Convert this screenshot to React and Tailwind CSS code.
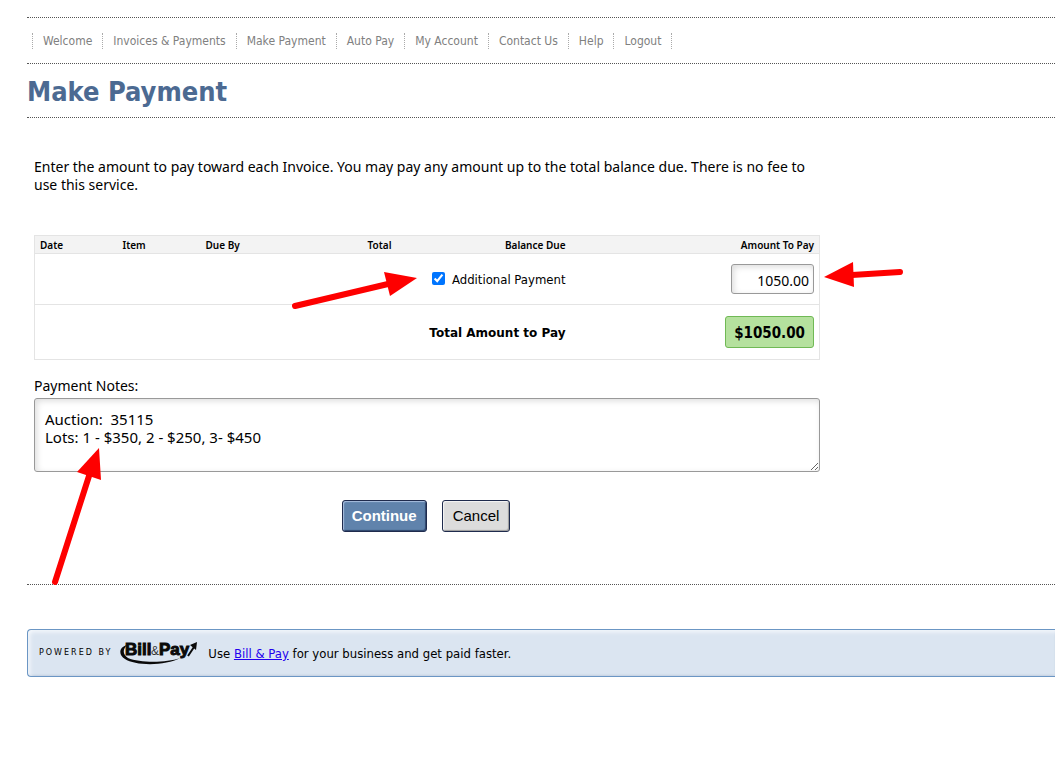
import React, { useState } from "react";

const navItems = [
  "Welcome",
  "Invoices & Payments",
  "Make Payment",
  "Auto Pay",
  "My Account",
  "Contact Us",
  "Help",
  "Logout",
];

const Logo = () => (
  <svg
    width="78"
    height="30"
    viewBox="0 0 78 30"
    role="img"
    aria-label="Bill & Pay"
    className="shrink-0"
  >
    <path
      d="M7 7C-1 9 -2 17 5 21C15 28 46 28 60 20C46 25 20 25 8 20C2 16 3 11 7 7Z"
      fill="#0a0a0a"
    />
    <g
      fill="#0a0a0a"
      stroke="#0a0a0a"
      strokeWidth="1"
      fontFamily="'Liberation Sans', sans-serif"
      fontWeight="700"
      fontSize="17"
    >
      <text x="5" y="17">
        Bill
      </text>
      <text x="39" y="17">
        Pay
      </text>
    </g>
    <text
      x="31"
      y="17"
      fill="#333"
      fontFamily="'Liberation Sans', sans-serif"
      fontSize="12"
    >
      &amp;
    </text>
    <path d="M68 18L74 9" stroke="#0a0a0a" strokeWidth="2" />
    <path d="M70 7L77 4L76 12Z" fill="#0a0a0a" />
  </svg>
);

const Arrows = () => (
  <svg
    className="absolute left-0 top-0 pointer-events-none"
    width="920"
    height="600"
    fill="#fe0000"
    stroke="#fe0000"
    strokeLinecap="round"
    aria-hidden="true"
  >
    <path d="M295 306L388 284" strokeWidth="6" />
    <path d="M417 278L384 272L390 296Z" stroke="none" />
    <path d="M900 272L852 275" strokeWidth="6" />
    <path d="M824 277L853 262L854 287Z" stroke="none" />
    <path d="M55 582L89 476" strokeWidth="6" />
    <path d="M99 448L77 472L101 480Z" stroke="none" />
  </svg>
);

const App = () => {
  const [additional, setAdditional] = useState(true);
  const [amount, setAmount] = useState("1050.00");
  const [notes, setNotes] = useState(
    "Auction:  35115\nLots: 1 - $350, 2 - $250, 3- $450"
  );
  const total = additional ? Number(amount) || 0 : 0;

  return (
    <div className="relative min-h-screen overflow-x-hidden bg-white pt-[17px] pl-[27px] text-black font-['DejaVu_Sans_Condensed','DejaVu_Sans',sans-serif]">
      <nav className="flex items-center border-y border-dotted border-[#555] h-[47px] pl-[5px]">
        <ul className="flex border-l border-dotted border-[#aaa] text-[12px] leading-[16px]">
          {navItems.map((item) => (
            <li
              key={item}
              className="border-r border-dotted border-[#aaa] px-[10px] whitespace-nowrap"
            >
              <a href="#" className="text-[#808080] hover:underline">
                {item}
              </a>
            </li>
          ))}
        </ul>
      </nav>

      <h1 className="border-b border-dotted border-[#555] pt-[10px] pb-[7px] text-[27px] leading-[36px] font-bold text-[#4c6a92]">
        Make Payment
      </h1>

      <main className="border-b border-dotted border-[#555] pt-10 pb-[52px] pl-[7px]">
        <form
          className="w-full max-w-[786px]"
          onSubmit={(e) => e.preventDefault()}
        >
          <p className="font-['Noto_Sans',sans-serif] text-[14px] leading-[18px]">
            Enter the amount to pay toward each Invoice. You may pay any amount
            up to the total balance due. There is no fee to use this service.
          </p>

          <table className="mt-[41px] w-full table-fixed border-collapse border border-[#e4e4e4]">
            <colgroup>
              <col className="w-[83px]" />
              <col className="w-[83px]" />
              <col className="w-[83px]" />
              <col className="w-[113px]" />
              <col className="w-[174px]" />
              <col />
            </colgroup>
            <thead>
              <tr className="h-[18px] border-b border-[#e4e4e4] bg-[#f3f3f3] font-['Noto_Sans',sans-serif] text-[10px] leading-[16px]">
                <th className="px-[5px] text-left font-semibold">Date</th>
                <th className="px-[5px] text-left font-semibold">Item</th>
                <th className="px-[5px] text-left font-semibold">Due By</th>
                <th className="px-[5px] text-right font-semibold">Total</th>
                <th className="px-[5px] text-right font-semibold">
                  Balance Due
                </th>
                <th className="px-[5px] text-right font-semibold">
                  Amount To Pay
                </th>
              </tr>
            </thead>
            <tbody>
              <tr className="h-[51px] border-b border-[#e4e4e4]">
                <td colSpan={5} className="px-[5px] pt-[2px]">
                  <div className="flex items-start justify-end gap-[7px]">
                    <input
                      id="additional"
                      type="checkbox"
                      checked={additional}
                      onChange={(e) => setAdditional(e.target.checked)}
                      className="h-[13px] w-[13px]"
                    />
                    <label
                      htmlFor="additional"
                      className="text-[13px] leading-[16px]"
                    >
                      Additional Payment
                    </label>
                  </div>
                </td>
                <td className="px-[5px]">
                  <input
                    type="text"
                    aria-label="Amount To Pay"
                    value={amount}
                    onChange={(e) => setAmount(e.target.value)}
                    className="ml-auto block h-[30px] w-[83px] rounded-[3px] border border-[#999] bg-white px-1 pt-[3px] text-right font-['Noto_Sans',sans-serif] text-[14px] shadow-[inset_2px_2px_6px_#ddd]"
                  />
                </td>
              </tr>
              <tr className="h-[55px]">
                <td
                  colSpan={5}
                  className="px-[5px] pt-[2px] text-right font-['DejaVu_Sans',sans-serif] text-[12px] font-bold"
                >
                  Total Amount to Pay
                </td>
                <td className="px-[5px] text-right">
                  <output className="inline-block rounded-[3px] border border-[#70b955] bg-[#b5e19e] px-2 pt-[6px] pb-1 text-[15px] leading-[20px] font-bold">
                    ${total.toFixed(2)}
                  </output>
                </td>
              </tr>
            </tbody>
          </table>

          <label
            htmlFor="notes"
            className="mt-[17px] block font-['Noto_Sans',sans-serif] text-[14px] leading-[18px]"
          >
            Payment Notes:
          </label>
          <textarea
            id="notes"
            value={notes}
            onChange={(e) => setNotes(e.target.value)}
            className="mt-[3px] block h-[74px] w-full rounded-[3px] border border-[#999] px-[10px] py-[11px] font-['Noto_Sans',sans-serif] text-[15px] leading-[18px] shadow-[inset_2px_2px_6px_#ddd]"
          />

          <div className="mt-7 flex justify-center gap-[15px] pr-[2px] font-['Liberation_Sans',Arial,sans-serif] text-[15px] leading-[20px]">
            <button
              type="submit"
              className="h-8 rounded-[3px] border border-[#1f2b4d] bg-[#6083ac] px-[9px] font-bold text-white shadow-[inset_1px_1px_1px_#a9bede,inset_-1px_-1px_1px_#2f456b]"
            >
              Continue
            </button>
            <button
              type="button"
              className="h-8 rounded-[3px] border border-[#1f2b4d] bg-[#dcdcdc] px-[10px] shadow-[inset_1px_1px_1px_#f5f5f5,inset_-1px_-1px_1px_#999]"
            >
              Cancel
            </button>
          </div>
        </form>
      </main>

      <footer className="mt-11 flex h-12 items-center rounded-l-[4px] border border-r-0 border-[#6b96c4] bg-[#dbe5f1] pl-[11px] shadow-[inset_2px_2px_4px_#f5f8fc,inset_0_-1px_2px_#bccbdc]">
        <span className="text-[8px] leading-[12px] tracking-[2px] whitespace-nowrap font-['DejaVu_Sans',sans-serif]">
          POWERED BY
        </span>
        <span className="mr-[10px] ml-2">
          <Logo />
        </span>
        <p className="pt-[2px] text-[13px] leading-[18px] whitespace-nowrap">
          Use{" "}
          <a href="#" className="text-[#2200ee] underline">
            Bill &amp; Pay
          </a>{" "}
          for your business and get paid faster.
        </p>
      </footer>

      <Arrows />
    </div>
  );
};

export default App;
